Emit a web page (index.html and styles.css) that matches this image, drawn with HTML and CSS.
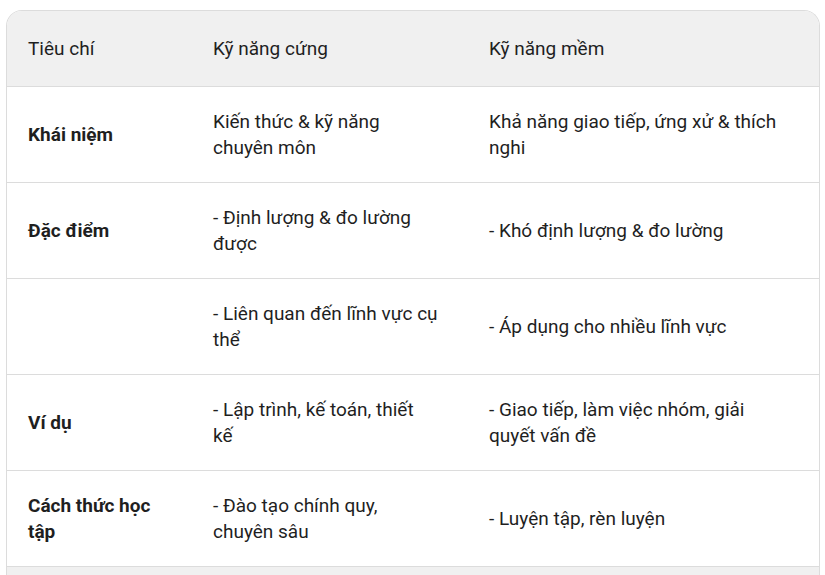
FILE: index.html
```html
<!DOCTYPE html>
<html lang="vi">
<head>
<meta charset="utf-8">
<link rel="stylesheet" href="styles.css">
</head>
<body>
<div class="wrap">
  <table class="tbl">
    <colgroup>
      <col class="c1">
      <col class="c2">
      <col class="c3">
    </colgroup>
    <thead>
      <tr>
        <th>Tiêu chí</th>
        <th>Kỹ năng cứng</th>
        <th>Kỹ năng mềm</th>
      </tr>
    </thead>
    <tbody>
      <tr>
        <td class="lbl">Khái niệm</td>
        <td class="mid">Kiến thức &amp; kỹ năng chuyên môn</td>
        <td>Khả năng giao tiếp, ứng xử &amp; thích nghi</td>
      </tr>
      <tr>
        <td class="lbl">Đặc điểm</td>
        <td class="mid">- Định lượng &amp; đo lường được</td>
        <td>- Khó định lượng &amp; đo lường</td>
      </tr>
      <tr>
        <td class="lbl"></td>
        <td class="mid">- Liên quan đến lĩnh vực cụ thể</td>
        <td>- Áp dụng cho nhiều lĩnh vực</td>
      </tr>
      <tr>
        <td class="lbl">Ví dụ</td>
        <td class="mid">- Lập trình, kế toán, thiết<br>kế</td>
        <td>- Giao tiếp, làm việc nhóm, giải quyết vấn đề</td>
      </tr>
      <tr>
        <td class="lbl">Cách thức học tập</td>
        <td class="mid">- Đào tạo chính quy, chuyên sâu</td>
        <td>- Luyện tập, rèn luyện</td>
      </tr>
    </tbody>
  </table>
  <div class="foot"></div>
</div>
</body>
</html>
```
FILE: styles.css
```css
html, body {
  margin: 0;
  padding: 0;
  background: #ffffff;
}
body {
  padding: 10px 6px 0 6px;
  font-family: Roboto, "Liberation Sans", Arial, sans-serif;
  color: #1f1f1f;
}
.wrap {
  width: 814px;
  box-sizing: border-box;
  border: 1px solid #dcdcdc;
  border-bottom: none;
  border-radius: 16px 16px 0 0;
  overflow: hidden;
}
.tbl {
  width: 100%;
  border-collapse: collapse;
  table-layout: fixed;
  font-size: 19px;
  line-height: 26px;
}
.c1 { width: 185px; }
.c2 { width: 276px; }
.tbl th {
  background: #f0f0f0;
  font-weight: 400;
  text-align: left;
  padding: 25px 24px 24px 21px;
  border-bottom: 1px solid #dcdcdc;
}
.tbl td {
  height: 52px;
  padding: 22px 24px 21px 21px;
  border-bottom: 1px solid #dcdcdc;
  vertical-align: middle;
}
.tbl td.mid {
  padding-right: 29px;
}
.tbl td.lbl {
  font-weight: 700;
}
.foot {
  height: 20px;
  background: #f0f0f0;
}
```
